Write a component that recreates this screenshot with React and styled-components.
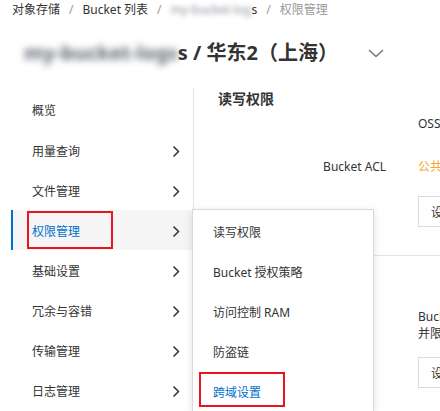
import React from "react";
import styled, { createGlobalStyle } from "styled-components";

const GlobalStyle = createGlobalStyle`
    * { box-sizing: border-box; }
    html, body {
        margin: 0;
        padding: 0;
        background: #fff;
    }
    body {
        font-family: "Noto Sans", "Noto Sans CJK SC", sans-serif;
        color: #333;
        width: 440px;
        height: 411px;
        overflow: hidden;
    }
`;

const Page = styled.div`
    width: 440px;
    height: 411px;
    overflow: hidden;
`;

const Breadcrumb = styled.div`
    display: flex;
    align-items: center;
    height: 20px;
    padding-left: 12px;
    font-size: 12px;
    line-height: 20px;
    white-space: nowrap;
`;

const Crumb = styled.span`
    color: ${props => props.last ? "#999" : "#333"};
`;

const Sep = styled.span`
    color: #999;
    margin: 0 9px;
`;

const Blurred = styled.span`
    display: inline-block;
    filter: blur(${props => props.amount || 2}px);
    color: ${props => props.color || "#8a8f99"};
`;

const TitleRow = styled.div`
    display: flex;
    align-items: center;
    height: 30px;
    margin: 18px 0 20px;
    padding-left: 24px;
    white-space: nowrap;
`;

const Title = styled.h1`
    margin: 0;
    font-size: 20px;
    font-weight: 700;
    color: #333;
    line-height: 30px;
`;

const TitleCaret = styled.span`
    display: flex;
    margin-left: 30px;
`;

const Body = styled.div`
    display: flex;
    align-items: stretch;
    height: 323px;
`;

const SideWrap = styled.div`
    position: relative;
    margin-left: 11px;
    width: 183px;
    flex-shrink: 0;
    border-right: 1px solid #e3e3e3;
`;

const NavList = styled.ul`
    list-style: none;
    margin: 0;
    padding: 0;
`;

const NavItem = styled.li`
    position: relative;
    display: flex;
    align-items: center;
    justify-content: space-between;
    height: ${props => props.first ? "42px" : "40px"};
    padding: 2px 13px 0 19px;
    border-left: 2px solid ${props => props.active ? "#0070cc" : "transparent"};
    background: ${props => props.active ? "#f5f5f5" : "transparent"};
    color: ${props => props.active ? "#0070cc" : "#333"};
    font-size: 12px;
    white-space: nowrap;
`;

const Marker = styled.span`
    position: absolute;
    left: ${props => props.left}px;
    top: ${props => props.top}px;
    width: ${props => props.w}px;
    height: ${props => props.h}px;
    border: 2px solid #e8141f;
    pointer-events: none;
`;

const Popup = styled.div`
    position: absolute;
    left: 181px;
    top: 121px;
    width: 182px;
    height: 204px;
    padding-top: 1px;
    background: #fff;
    border: 1px solid #d9d9d9;
    box-shadow: 0 2px 8px rgba(0, 0, 0, 0.12);
    z-index: 5;
`;

const PopItem = styled.div`
    position: relative;
    display: flex;
    align-items: center;
    height: 40px;
    padding: 2px 0 0 20px;
    font-size: 12px;
    color: ${props => props.active ? "#0070cc" : "#333"};
    white-space: nowrap;
`;

const Main = styled.div`
    flex: 1;
    min-width: 0;
    overflow: hidden;
`;

const Section = styled.section`
    padding: 0 0 ${props => props.pb || 28}px 24px;
    border-bottom: ${props => props.divider ? "1px solid #e5e5e5" : "none"};
`;

const SectionTitle = styled.h2`
    margin: 0;
    padding-top: ${props => props.pt || 0}px;
    font-size: 14px;
    font-weight: 700;
    line-height: 20px;
    color: #333;
    white-space: nowrap;
`;

const Form = styled.div`
    display: grid;
    grid-template-columns: 168px auto;
    column-gap: 32px;
    margin-top: ${props => props.mt || 0}px;
`;

const Label = styled.div`
    text-align: right;
    font-size: 12px;
    line-height: 20px;
    color: #333;
    white-space: nowrap;
`;

const Value = styled.div`
    font-size: 12px;
    line-height: ${props => props.lh || 20}px;
    color: ${props => props.warn ? "#f7a630" : "#333"};
    white-space: nowrap;
`;

const Button = styled.button`
    display: inline-flex;
    align-items: center;
    height: 31px;
    padding: 0 12px;
    margin-top: ${props => props.mt || 0}px;
    border: 1px solid #dcdcdc;
    background: #fff;
    font-family: inherit;
    font-size: 12px;
    color: #333;
    white-space: nowrap;
`;

const ChevronRight = () => (
    <svg width="8" height="13" viewBox="0 0 8 13" fill="none">
        <path d="M1.5 1.5L6.5 6.5L1.5 11.5" stroke="#333" strokeWidth="1.5" />
    </svg>
);

const ChevronDown = () => (
    <svg width="16" height="9" viewBox="0 0 16 9" fill="none">
        <path d="M1 1L8 7.5L15 1" stroke="#7a7a7a" strokeWidth="1.6" />
    </svg>
);

const navItems = [
    { name: "概览", arrow: false },
    { name: "用量查询", arrow: true },
    { name: "文件管理", arrow: true },
    { name: "权限管理", arrow: true, active: true },
    { name: "基础设置", arrow: true },
    { name: "冗余与容错", arrow: true },
    { name: "传输管理", arrow: true },
    { name: "日志管理", arrow: true },
];

const subItems = ["读写权限", "Bucket 授权策略", "访问控制 RAM", "防盗链", "跨域设置"];

const App = () => (
    <>
        <GlobalStyle />
        <Page>
            <Breadcrumb>
                <Crumb>对象存储</Crumb>
                <Sep>/</Sep>
                <Crumb>Bucket 列表</Crumb>
                <Sep>/</Sep>
                <Crumb>
                    <Blurred amount={2.6}>my-bucket-log</Blurred>s
                </Crumb>
                <Sep>/</Sep>
                <Crumb last>权限管理</Crumb>
            </Breadcrumb>

            <TitleRow>
                <Title>
                    <Blurred amount={3.6} color="#5f6470">my-bucket-logs</Blurred>s / 华东2（上海）
                </Title>
                <TitleCaret>
                    <ChevronDown />
                </TitleCaret>
            </TitleRow>

            <Body>
                <SideWrap>
                    <NavList>
                        {navItems.map((item, i) => (
                            <NavItem key={item.name} first={i === 0} active={item.active}>
                                <span>{item.name}</span>
                                {item.arrow && <ChevronRight />}
                                {item.active && <Marker left={14} top={1} w={86} h={38} />}
                            </NavItem>
                        ))}
                    </NavList>
                    <Popup>
                        {subItems.map((name, i) => (
                            <PopItem key={name} active={i === subItems.length - 1}>
                                {name}
                                {i === subItems.length - 1 && <Marker left={6} top={1} w={86} h={35} />}
                            </PopItem>
                        ))}
                    </Popup>
                </SideWrap>

                <Main>
                    <Section divider>
                        <SectionTitle pt={1}>读写权限</SectionTitle>
                        <Form mt={5}>
                            <Label />
                            <Value>OSS ACL 提供 Bucket 级别的权限访问控制。</Value>
                        </Form>
                        <Form mt={23}>
                            <Label>Bucket ACL</Label>
                            <Value warn>公共读</Value>
                        </Form>
                        <Form>
                            <Label />
                            <div>
                                <Button mt={19}>设置</Button>
                            </div>
                        </Form>
                    </Section>
                    <Section pb={0}>
                        <SectionTitle pt={24}>Bucket 授权策略</SectionTitle>
                        <Form mt={8}>
                            <Label />
                            <Value lh={17}>
                                Bucket Policy 可以授权其他用户访问您指定的 OSS 资源，
                                <br />
                                并限定访问的条件与操作。
                            </Value>
                        </Form>
                        <Form>
                            <Label />
                            <div>
                                <Button mt={15}>设置</Button>
                            </div>
                        </Form>
                    </Section>
                </Main>
            </Body>
        </Page>
    </>
);

export default App;
